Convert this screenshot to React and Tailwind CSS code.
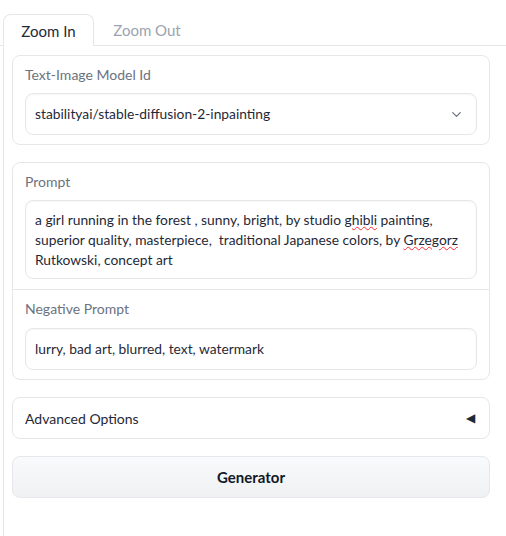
import { ChevronDown } from 'lucide-react';

const font = { fontFamily: 'Lato, "Noto Sans", sans-serif' };

function Label({ children, className = 'mb-2' }) {
  return <div className={`text-[14px] leading-5 text-[#6b7280] ${className}`}>{children}</div>;
}

function Box({ children, className = '' }) {
  return (
    <div className={`rounded-lg border border-[#e5e7eb] bg-white shadow-[inset_0_1px_2px_rgba(0,0,0,0.04)] px-[9px] text-[13.8px] text-[#1f2937] ${className}`}>
      {children}
    </div>
  );
}

export default function App() {
  return (
    <div className="w-[506px] h-[536px] bg-white overflow-hidden" style={font}>
      <div className="flex h-[46px] pt-[14px]">
        <div className="w-[3px] shrink-0 border-b border-[#e5e7eb]" />
        <div className="w-[91px] rounded-t-lg border border-b-0 border-[#e5e7eb] bg-white flex items-center justify-center pt-[2px] text-[15px] text-[#1f2937]">
          Zoom In
        </div>
        <div className="w-[106px] flex items-center justify-center pt-[2px] text-[15px] text-[#9ca3af] border-b border-[#e5e7eb]">
          Zoom Out
        </div>
        <div className="flex-1 border-b border-[#e5e7eb]" />
      </div>
      <div className="ml-[3px] border-l border-[#e5e7eb] h-full pl-2 pr-4 pt-[9px] flex flex-col gap-[17px]">
        <div className="rounded-lg border border-[#e5e7eb] px-3 pt-[9px] pb-[9px]">
          <Label>Text-Image Model Id</Label>
          <Box className="h-[42px] flex items-center justify-between">
            <span>stabilityai/stable-diffusion-2-inpainting</span>
            <ChevronDown className="w-[15px] h-[15px] text-[#6b7280] mr-[3px]" strokeWidth={2} />
          </Box>
        </div>

        <div className="rounded-lg border border-[#e5e7eb]">
          <div className="px-3 pt-[9px] pb-[10px] border-b border-[#e5e7eb]">
            <Label>Prompt</Label>
            <Box className="h-[79px] pt-[9px] leading-5">
              a girl running in the forest , sunny, bright, by studio{' '}
              <span className="underline decoration-wavy decoration-red-500 decoration-1">ghibli</span> painting, superior quality, masterpiece,&nbsp; traditional Japanese colors, by{' '}
              <span className="underline decoration-wavy decoration-red-500 decoration-1">Grzegorz</span> Rutkowski, concept art
            </Box>
          </div>
          <div className="px-3 pt-[9px] pb-[9px]">
            <Label className="mb-[9px]">Negative Prompt</Label>
            <Box className="h-[42px] flex items-center">lurry, bad art, blurred, text, watermark</Box>
          </div>
        </div>

        <div className="rounded-lg border border-[#e5e7eb] h-[42px] px-3 flex items-center justify-between text-[14px] text-[#1f2937]">
          <span>Advanced Options</span>
          <span className="text-[12px] mr-[2px]">◀</span>
        </div>

        <button className="h-[42px] rounded-lg border border-[#e5e7eb] bg-gradient-to-b from-[#f9fafb] to-[#f0f1f3] text-[15px] font-bold text-[#111827]">
          Generator
        </button>
      </div>
    </div>
  );
}
